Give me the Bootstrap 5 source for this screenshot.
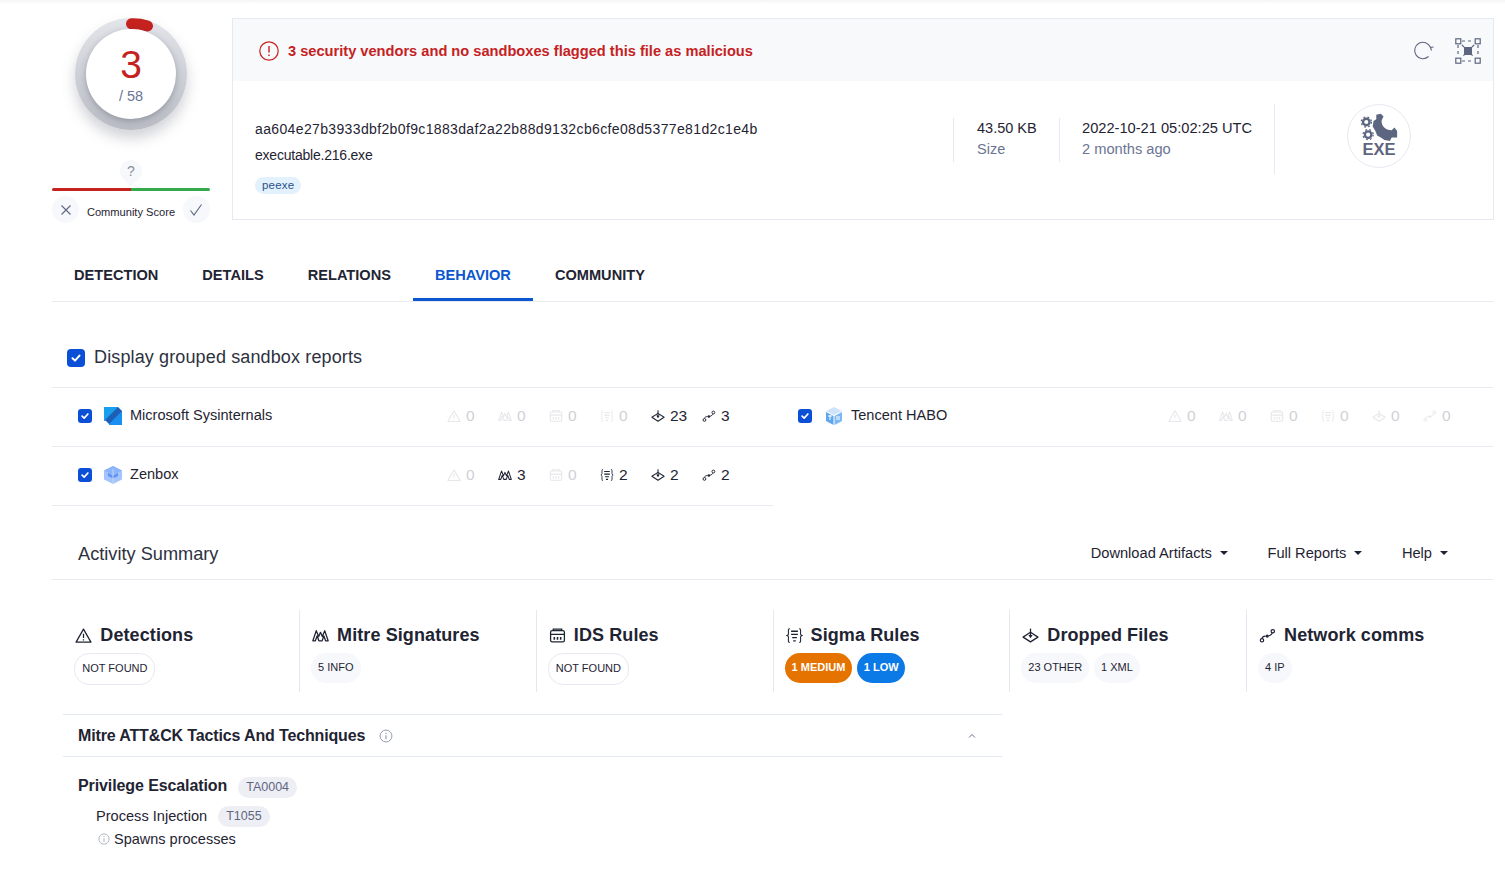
<!DOCTYPE html>
<html lang="en"><head><meta charset="utf-8"><title>Behavior</title>
<link href="https://cdn.jsdelivr.net/npm/bootstrap@5.3.0/dist/css/bootstrap.min.css" rel="stylesheet">
<style>
html,body{height:873px;overflow:hidden}
body{font-family:"Liberation Sans",Arial,sans-serif;color:#1f2433;background:linear-gradient(#f4f4f6,#fff 4px);font-size:14px}
.page{padding:18px 12px 0 52px}
.top-row{display:flex;gap:22px;height:202px;margin-right:-1px}
.score-col{width:158px;flex:none}
.gauge{position:relative;width:112px;height:112px;margin:0 auto;border-radius:50%;background:linear-gradient(#e3e5ea,#b9bcc4);box-shadow:0 8px 14px rgba(90,95,110,.28);display:flex;align-items:center;justify-content:center}
.gauge-in{width:90px;height:90px;border-radius:50%;background:#fff;box-shadow:0 2px 6px rgba(60,65,80,.35);display:flex;flex-direction:column;align-items:center;justify-content:center;z-index:1;padding-top:1px}
.gauge-arc{position:absolute;left:0;top:0;width:112px;height:112px}
.g-num{font-size:39px;line-height:41px;color:#c5221f}
.g-den{font-size:14.5px;line-height:17px;color:#6b7594;margin-top:3px}
.pin{width:22px;height:22px;margin:30px auto 0;border-radius:50%;background:#f7f8fb;color:#8a90a2;text-align:center;line-height:22px;font-size:14px;position:relative}
.pin::after{content:"";position:absolute;left:5px;top:12px;width:12px;height:12px;background:#f7f8fb;transform:rotate(45deg);z-index:-1}
.cbar{display:flex;height:3px;margin-top:6px;border-radius:2px;overflow:hidden}
.cbar i{flex:1;background:#c5221f}.cbar b{flex:1;background:#34a94d}
.cs-row{display:flex;align-items:center;justify-content:space-between;margin-top:5px;font-size:11.1px;color:#1f2433}
.cs-btn{width:27px;height:27px;border-radius:50%;background:#f7f8fb;display:flex;align-items:center;justify-content:center;flex:none}
.cs-lab{padding-top:6px}
.file-card{flex:1;border:1px solid #e6e9f2;display:flex;flex-direction:column}
.alert-bar{height:62px;background:#f8f9fb;display:flex;align-items:center;padding:2px 12px 0 26px;font-weight:700;font-size:14.63px;color:#c5221f}
.alert-msg{padding-top:1px}
.alert-ico{margin-right:9px;flex:none}
.alert-tools{margin-left:auto;display:flex;align-items:center;gap:21px}
.file-body{flex:1;display:flex;padding:0}
.file-main{width:720px;padding:38px 0 0 22px;line-height:1}
.hash{font-size:14px;line-height:20px;letter-spacing:.36px}
.fname{font-size:14px;line-height:20px;margin-top:6px;letter-spacing:-.22px}
.tagp{display:inline-block;background:#e3f1fd;color:#28528a;font-size:11.5px;line-height:17px;border-radius:9px;padding:0 7px;margin-top:12px;letter-spacing:.2px}
.stat1{border-left:1px solid #e6e9f2;height:44px;margin-top:37px;padding-left:23px;line-height:22px;font-size:14.5px}
.stat1 span{color:#6b7594;display:block}
.s-size{width:106px;padding-top:0;line-height:21px}
.s-date{width:216px;border-right:1px solid #e6e9f2;border-left:0;height:70px;margin-top:23px;padding-top:14px;background:linear-gradient(#e6e9f2,#e6e9f2) no-repeat 0 14px/1px 44px;padding-left:23px;font-size:14.65px;line-height:21px}
.exe-wrap{flex:1;display:flex;justify-content:center;padding:23px 0 0 0;margin-right:10px}
.exe{width:64px;height:64px;border-radius:50%;border:1px solid #e6e9f2;display:flex;align-items:center;justify-content:center;flex-direction:column}
.exe-svg{margin-top:-3px}
.exe-t{font-size:16.5px;line-height:15px;color:#5d6680;font-weight:700;margin-top:1px}
.tabs-x{display:flex;height:52px;margin-top:30px;border-bottom:1px solid #e8eaef;font-weight:700;font-size:14.6px}
.tab-x{padding:0 22px;display:flex;align-items:center;color:#1f2433}
.tab-x.on{color:#0b57d0;border-bottom:3px solid #0b57d0;padding-top:3px}
.grp{height:86px;display:flex;align-items:center;gap:9px;padding:26px 0 0 15px;font-size:18px;letter-spacing:.13px;color:#2d3140;border-bottom:1px solid #e8eaef}
.chk{width:14px;height:14px;border-radius:3px;background:#0b4fd6;display:flex;align-items:center;justify-content:center;flex:none;margin-top:-2px}
.chk.big{width:18px;height:18px;border-radius:4px;margin-top:0}
.sb-grid{display:grid;grid-template-columns:721px 720px}
.sb{height:59px;border-bottom:1px solid #e8eaef;display:flex;align-items:center;padding-left:26px}
.sb.rgt{padding-left:25px}
.sb-name{font-size:14.55px;display:flex;align-items:center;gap:7px;width:355px;padding-left:11px;margin-top:-2px}
.sb.rgt .sb-name{padding-left:12px;width:356px}
.sb-n{display:flex;width:51px;align-items:center;gap:5px;font-size:15.5px;color:#1f2433;flex:none;margin-top:-3px}
.sb-n.off{color:#cfd1d6}
.sb-n.off svg{opacity:.5}
.act-h{height:74px;display:flex;align-items:center;justify-content:space-between;border-bottom:1px solid #e8eaef;padding:24px 45px 0 26px}
.act-h h2{font-size:18.2px;font-weight:400;margin:0;color:#2d3140}
.act-links{display:flex;gap:39.5px;font-size:14.65px;margin-top:-2px}
.caret-x::after{content:"";display:inline-block;margin-left:8px;vertical-align:3px;border-top:4px solid #1f2433;border-left:4px solid transparent;border-right:4px solid transparent}
.stats{display:flex;margin:30px 0 0 11.3px}
.stat-c{width:236.75px;height:82px;padding:15px 0 0 12px;border-right:1px solid #e4e8f0}
.stat-c:last-child{border-right:0}
.stat-t{display:flex;align-items:center;gap:8px;font-size:18px;font-weight:700;line-height:21px;letter-spacing:.1px;color:#1f2433}
.pills{display:flex;gap:5px;margin-top:7px;margin-left:-1px}
.pl{height:30px;border-radius:15px;background:#f7f8fb;font-size:11px;line-height:28px;padding:0 7px;color:#1f2433}
.pl.line{background:#fff;border:1px solid #e6e9f2;height:32px;line-height:29px}
.pl.med{background:#e57300;color:#fff;font-weight:700}
.pl.low{background:#0b7ae6;color:#fff;font-weight:700;padding:0 6.5px}
.mitre{width:939px;margin:22px 0 0 11px;border-top:1px solid #e4e8f0;border-bottom:1px solid #e4e8f0;height:43px;display:flex;align-items:center;justify-content:space-between;padding:0 26px 0 15px}
.mitre b{font-size:16px;letter-spacing:-.14px}
.mitre-inf{margin-left:6px}
.tac{margin:17px 0 0 26px}
.tac-h{display:flex;align-items:center;gap:11px;font-size:16px;font-weight:700;line-height:24px;letter-spacing:-.1px}
.ref{background:#eeeff5;color:#5d6680;font-size:12.5px;font-weight:400;line-height:21px;border-radius:11px;padding:0 8px;margin-top:2px;letter-spacing:0}
.tech{display:flex;align-items:center;gap:11px;font-size:14.6px;line-height:22px;margin:6px 0 0 18px}
.sig{display:flex;align-items:center;gap:4px;font-size:14.5px;line-height:20px;margin:2px 0 0 20px}
</style></head><body>
<svg width="0" height="0" class="d-block position-absolute"><defs>
<symbol id="i-warn" viewBox="0 0 16 16"><path d="M8 2 L15 14.2 H1 Z" fill="none" stroke="currentColor" stroke-width="1.2" stroke-linejoin="round"/><path d="M8 6.4V10.4M8 11.6v1" stroke="currentColor" stroke-width="1.2"/></symbol>
<symbol id="i-mitre" viewBox="0 0 16 16"><path d="M.8 13 4 3.500 6.300 9 8 5 9.700 9 12 3.500 15.200 13H12.800L11.200 8.500 9.500 13H6.500L4.800 8.500 3.200 13Z" fill="none" stroke="currentColor" stroke-width="1.200" stroke-linejoin="round"/></symbol>
<symbol id="i-ids" viewBox="0 0 16 16"><rect x="1.500" y="3.500" width="13" height="10.500" rx="1.500" fill="none" stroke="currentColor" stroke-width="1.200"/><path d="M4 3.500V2h8v1.500M1.500 7h13" fill="none" stroke="currentColor" stroke-width="1.200"/><path d="M5 9.300v2.700M8 9.300v2.700M11 9.300v2.700" stroke="currentColor" stroke-width="1.500"/></symbol>
<symbol id="i-sigma" viewBox="0 0 16 16"><path d="M3.500 1.500C1.800 1.500 2.300 4 2.300 6.500 2.300 7.500 1 8 1 8s1.300.5 1.300 1.500c0 2.500-.5 5 1.200 5M12.500 1.500c1.700 0 1.200 2.500 1.200 5 0 1 1.300 1.500 1.300 1.500s-1.300.5-1.300 1.500c0 2.500.5 5-1.200 5" fill="none" stroke="currentColor" stroke-width="1"/><path d="M4.800 4h6.400M4.800 7h6.400M5.800 10h4.400M6.800 13h2.400" stroke="currentColor" stroke-width="1.200"/></symbol>
<symbol id="i-drop" viewBox="0 0 16 16"><path d="M8 5 15 9.500 8 14 1 9.500Z" fill="none" stroke="currentColor" stroke-width="1.200" stroke-linejoin="round"/><path d="M8 1.500V8" stroke="currentColor" stroke-width="1.200"/><path d="M6 7.500h4L8 10.500Z" fill="currentColor"/></symbol>
<symbol id="i-net" viewBox="0 0 16 16"><circle cx="2.800" cy="12.500" r="1.600" fill="none" stroke="currentColor" stroke-width="1.100"/><circle cx="13" cy="4" r="1.600" fill="none" stroke="currentColor" stroke-width="1.100"/><circle cx="7.800" cy="8.500" r="1.500" fill="currentColor"/><path d="M2.800 10.800C3 9.300 4.500 8.700 6.300 8.600M9.300 8.200C10.800 8 11.800 7 12.600 5.700" fill="none" stroke="currentColor" stroke-width="1.100"/></symbol>
<symbol id="i-info" viewBox="0 0 16 16"><circle cx="8" cy="8" r="6.800" fill="none" stroke="currentColor" stroke-width="1"/><path d="M8 7v4.600M8 4.300v1.300" stroke="currentColor" stroke-width="1.200"/></symbol>
<symbol id="i-check" viewBox="0 0 12 12"><path d="M2.500 6.200 5 8.600 9.500 3.600" fill="none" stroke="#fff" stroke-width="2" stroke-linecap="round" stroke-linejoin="round"/></symbol>
</defs></svg>
<div class="page">
<div class="top-row">
 <div class="score-col">
  <div class="gauge">
   <svg class="gauge-arc" viewBox="0 0 112 112"><path d="M56.500 5.800A50 50 0 0 1 72.500 8" fill="none" stroke="#c5221f" stroke-width="11" stroke-linecap="round"/></svg>
   <div class="gauge-in"><div class="g-num">3</div><div class="g-den">/ 58</div></div>
  </div>
  <div class="pin">?</div>
  <div class="cbar"><i></i><b></b></div>
  <div class="cs-row">
   <div class="cs-btn"><svg width="12" height="12" viewBox="0 0 12 12"><path d="M1.500 1.500 10.500 10.500M10.500 1.500 1.500 10.500" stroke="#5d6680" stroke-width="1.100"/></svg></div>
   <div class="cs-lab">Community Score</div>
   <div class="cs-btn"><svg width="14" height="14" viewBox="0 0 14 14"><path d="M1.500 7.500 5 12 12.500 1.500" fill="none" stroke="#5d6680" stroke-width="1.100"/></svg></div>
  </div>
 </div>
 <div class="file-card">
  <div class="alert-bar">
   <svg width="20" height="20" viewBox="0 0 20 20" class="alert-ico"><circle cx="10" cy="10" r="9.200" fill="none" stroke="#c5221f" stroke-width="1.200"/><path d="M10 5v6.500M10 13.500v1.500" stroke="#c5221f" stroke-width="1.400"/></svg>
   <span class="alert-msg">3 security vendors and no sandboxes flagged this file as malicious</span>
   <span class="alert-tools">
    <svg width="22" height="22" viewBox="0 0 22 22"><path d="M16.500 16.500A8.200 8.200 0 1 1 18.500 7.500M19.500 10.500 18.500 7.500 21.500 7" fill="none" stroke="#5d6680" stroke-width="1.100"/></svg>
    <svg width="26" height="26" viewBox="0 0 26 26"><g fill="none" stroke="#5d6680" stroke-width="1.200"><rect x=".8" y=".8" width="5" height="5"/><rect x="20.200" y=".8" width="5" height="5"/><rect x=".8" y="20.200" width="5" height="5"/><rect x="20.200" y="20.200" width="5" height="5"/><path stroke-dasharray="3 3" d="M7 3h12M7 23h12M3 7v12M23 7v12M7 7l12 12M19 7 7 19"/></g><rect x="9" y="9" width="8" height="8" fill="#5d6680"/></svg>
   </span>
  </div>
  <div class="file-body">
   <div class="file-main">
    <div class="hash">aa604e27b3933dbf2b0f9c1883daf2a22b88d9132cb6cfe08d5377e81d2c1e4b</div>
    <div class="fname">executable.216.exe</div>
    <div class="tagp">peexe</div>
   </div>
   <div class="stat1 s-size">43.50 KB<span>Size</span></div>
   <div class="stat1 s-date">2022-10-21 05:02:25 UTC<span>2 months ago</span></div>
   <div class="exe-wrap"><div class="exe">
    <svg width="40" height="29" viewBox="0 0 44 32" class="exe-svg"><g fill="none" stroke="#5d6680" stroke-width="2.600"><circle cx="8" cy="11" r="3.600"/><circle cx="10" cy="25" r="3.600"/></g><g fill="none" stroke="#5d6680" stroke-width="1.400" stroke-dasharray="2 2.500"><circle cx="8" cy="11" r="5.600"/><circle cx="10" cy="25" r="5.600"/></g><path d="M19 3 24 2 27 5 25 9C24 15 29 20 36 20L39 17 42 21 42 28 36 28 34 32 28 31 24 28 20 26 18 21 15 16 16 10 19 8Z" fill="#5d6680"/></svg>
    <div class="exe-t">EXE</div>
   </div></div>
  </div>
 </div>
</div>
<div class="tabs-x"><div class="tab-x">DETECTION</div><div class="tab-x">DETAILS</div><div class="tab-x">RELATIONS</div><div class="tab-x on">BEHAVIOR</div><div class="tab-x">COMMUNITY</div></div>
<div class="grp"><span class="chk big"><svg width="12" height="12"><use href="#i-check"/></svg></span>Display grouped sandbox reports</div>
<div class="sb-grid">
 <div class="sb">
  <span class="chk"><svg width="10" height="10"><use href="#i-check"/></svg></span>
  <div class="sb-name"><svg width="20" height="20" viewBox="0 0 20 20"><path d="M1 1H15V2L2 15H1Z" fill="#18a0ee"/><path d="M18 5H19V19H6V17Z" fill="#1b8ff0"/><path d="M15 1 19 5 6 18 2 14Z" fill="#1c5fb5"/></svg>Microsoft Sysinternals</div>
  <span class="sb-n off"><svg width="14" height="14"><use href="#i-warn"/></svg>0</span>
  <span class="sb-n off"><svg width="14" height="14"><use href="#i-mitre"/></svg>0</span>
  <span class="sb-n off"><svg width="14" height="14"><use href="#i-ids"/></svg>0</span>
  <span class="sb-n off"><svg width="14" height="14"><use href="#i-sigma"/></svg>0</span>
  <span class="sb-n"><svg width="14" height="14"><use href="#i-drop"/></svg>23</span>
  <span class="sb-n"><svg width="14" height="14"><use href="#i-net"/></svg>3</span>
 </div>
 <div class="sb rgt">
  <span class="chk"><svg width="10" height="10"><use href="#i-check"/></svg></span>
  <div class="sb-name"><svg width="20" height="20" viewBox="0 0 20 20"><path d="M10 1 18 5 10 9 2 5Z" fill="#cfe3fb"/><path d="M2 6 9.500 10V19L2 15Z" fill="#5fa5f0"/><path d="M18 6 10.500 10V19L18 15Z" fill="#7db7f4"/><path d="M4 10h4M6 9v5M12 11h4M12 13h4" stroke="#fff" stroke-width="1"/></svg>Tencent HABO</div>
  <span class="sb-n off"><svg width="14" height="14"><use href="#i-warn"/></svg>0</span>
  <span class="sb-n off"><svg width="14" height="14"><use href="#i-mitre"/></svg>0</span>
  <span class="sb-n off"><svg width="14" height="14"><use href="#i-ids"/></svg>0</span>
  <span class="sb-n off"><svg width="14" height="14"><use href="#i-sigma"/></svg>0</span>
  <span class="sb-n off"><svg width="14" height="14"><use href="#i-drop"/></svg>0</span>
  <span class="sb-n off"><svg width="14" height="14"><use href="#i-net"/></svg>0</span>
 </div>
 <div class="sb">
  <span class="chk"><svg width="10" height="10"><use href="#i-check"/></svg></span>
  <div class="sb-name"><svg width="20" height="20" viewBox="0 0 20 20"><path d="M10 1 19 5.500V14.500L10 19 1 14.500V5.500Z" fill="#a5c4fb"/><path d="M10 1 19 5.500 10 10 1 5.500Z" fill="#8cb4fa"/><path d="M5 8 10 10.500 15 8V11L10 13.500 5 11Z" fill="#5f93f5"/><path d="M10 4v15" stroke="#c3d7fc" stroke-width="1"/></svg>Zenbox</div>
  <span class="sb-n off"><svg width="14" height="14"><use href="#i-warn"/></svg>0</span>
  <span class="sb-n"><svg width="14" height="14"><use href="#i-mitre"/></svg>3</span>
  <span class="sb-n off"><svg width="14" height="14"><use href="#i-ids"/></svg>0</span>
  <span class="sb-n"><svg width="14" height="14"><use href="#i-sigma"/></svg>2</span>
  <span class="sb-n"><svg width="14" height="14"><use href="#i-drop"/></svg>2</span>
  <span class="sb-n"><svg width="14" height="14"><use href="#i-net"/></svg>2</span>
 </div>
</div>
<div class="act-h"><h2>Activity Summary</h2><div class="act-links"><span class="caret-x">Download Artifacts</span><span class="caret-x">Full Reports</span><span class="caret-x">Help</span></div></div>
<div class="stats">
 <div class="stat-c"><div class="stat-t"><svg width="17" height="17"><use href="#i-warn"/></svg>Detections</div><div class="pills"><span class="pl line">NOT FOUND</span></div></div>
 <div class="stat-c"><div class="stat-t"><svg width="17" height="17"><use href="#i-mitre"/></svg>Mitre Signatures</div><div class="pills"><span class="pl">5 INFO</span></div></div>
 <div class="stat-c"><div class="stat-t"><svg width="17" height="17"><use href="#i-ids"/></svg>IDS Rules</div><div class="pills"><span class="pl line">NOT FOUND</span></div></div>
 <div class="stat-c"><div class="stat-t"><svg width="17" height="17"><use href="#i-sigma"/></svg>Sigma Rules</div><div class="pills"><span class="pl med">1 MEDIUM</span><span class="pl low">1 LOW</span></div></div>
 <div class="stat-c"><div class="stat-t"><svg width="17" height="17"><use href="#i-drop"/></svg>Dropped Files</div><div class="pills"><span class="pl">23 OTHER</span><span class="pl">1 XML</span></div></div>
 <div class="stat-c"><div class="stat-t"><svg width="17" height="17"><use href="#i-net"/></svg>Network comms</div><div class="pills"><span class="pl">4 IP</span></div></div>
</div>
<div class="mitre"><span class="d-flex align-items-center gap-2"><b>Mitre ATT&amp;CK Tactics And Techniques</b><svg width="14" height="14" class="mitre-inf" color="#8a90a2"><use href="#i-info"/></svg></span><svg width="8" height="6" viewBox="0 0 8 6"><path d="M1 4.500 4 1.500 7 4.500" fill="none" stroke="#6b7594" stroke-width="1"/></svg></div>
<div class="tac">
 <div class="tac-h">Privilege Escalation <span class="ref">TA0004</span></div>
 <div class="tech">Process Injection <span class="ref">T1055</span></div>
 <div class="sig"><svg width="12" height="12" color="#9aa0b0"><use href="#i-info"/></svg>Spawns processes</div>
</div>
</div>
<script src="https://cdn.jsdelivr.net/npm/bootstrap@5.3.0/dist/js/bootstrap.bundle.min.js"></script>
</body></html>
